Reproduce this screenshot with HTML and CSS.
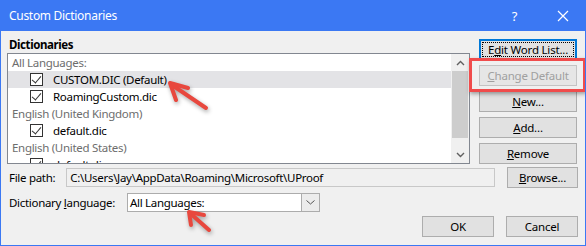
FILE: index.html
```html
<!DOCTYPE html>
<html lang="en">
<head>
  <meta charset="UTF-8" />
  <title>Custom Dictionaries</title>
  <link rel="stylesheet" href="styles.css">
</head>
<body>
  <div class="window">
    <div class="titlebar">
      <span class="title">Custom Dictionaries</span>
      <span class="help">?</span>
      <svg class="close" width="12" height="12" viewBox="0 0 12 12">
        <path d="M1 1 L11 11 M11 1 L1 11" stroke="#fff" stroke-width="1.2" fill="none"/>
      </svg>
    </div>

    <div class="content">
      <div class="top">
        <div class="dictpane">
          <div class="heading">Dictionaries</div>
          <div class="listbox">
            <div class="items">
              <div class="group">All Languages:</div>
              <div class="item selected"><span class="check"></span>CUSTOM.DIC (Default)</div>
              <div class="item"><span class="check"></span>RoamingCustom.dic</div>
              <div class="group">English (United Kingdom)</div>
              <div class="item"><span class="check"></span>default.dic</div>
              <div class="group">English (United States)</div>
              <div class="item last"><span class="check"></span>default.dic</div>
            </div>
            <div class="scrollbar">
              <div class="arrow up">
                <svg width="9" height="6" viewBox="0 0 9 6"><path d="M1 5 L4.5 1.5 L8 5" stroke="#606060" stroke-width="1.4" fill="none"/></svg>
              </div>
              <div class="thumb"></div>
              <div class="track"></div>
              <div class="arrow down">
                <svg width="9" height="6" viewBox="0 0 9 6"><path d="M1 1 L4.5 4.5 L8 1" stroke="#606060" stroke-width="1.4" fill="none"/></svg>
              </div>
            </div>
          </div>
        </div>

        <div class="sidebtns">
          <button class="btn focused"><span class="focusring">E<u>d</u>it Word List...</span></button>
          <button class="btn disabled"><u>C</u>hange Default</button>
          <button class="btn"><u>N</u>ew...</button>
          <button class="btn"><u>A</u>dd...</button>
          <button class="btn"><u>R</u>emove</button>
        </div>
      </div>

      <div class="pathrow">
        <span class="label">File path:</span>
        <div class="pathfield">C:\Users\Jay\AppData\Roaming\Microsoft\UProof</div>
        <button class="btn browse"><u>B</u>rowse...</button>
      </div>

      <div class="langrow">
        <span class="label">Dictionary <u>l</u>anguage:</span>
        <div class="combo">
          <span class="combo-value">All Languages:</span>
          <span class="combo-btn">
            <svg width="9" height="5" viewBox="0 0 9 5"><path d="M0.5 0.5 L4.5 4 L8.5 0.5" stroke="#555" stroke-width="1" fill="none"/></svg>
          </span>
        </div>
      </div>

      <div class="actions">
        <button class="btn action">OK</button>
        <button class="btn action">Cancel</button>
      </div>
    </div>

    <!-- annotations drawn over the screenshot -->
    <div class="highlight-box"></div>
    <svg class="annot" width="586" height="246" viewBox="0 0 586 246">
      <g stroke="#e8483e" stroke-width="4" stroke-linecap="round" stroke-linejoin="round" fill="none">
        <path d="M205 108 L171 85"/>
        <path d="M187 88 L169 83 L175 100"/>
        <path d="M208 230 L190 214"/>
        <path d="M203 215 L188 212 L190 225"/>
      </g>
    </svg>
  </div>
</body>
</html>
```

FILE: styles.css
```css
* {
  box-sizing: border-box;
}
body {
  margin: 0;
  font-family: 'Noto Sans', 'Open Sans', sans-serif;
  font-size: 11.5px;
  letter-spacing: -0.3px;
  color: #000;
  background: #fff;
}
.window {
  width: 586px;
  height: 246px;
  position: relative;
  background-color: #f0f0f0;
  border: 1px solid #3b78f3;
  border-top: none;
  overflow: hidden;
}
.titlebar {
  height: 31px;
  margin: 0 -1px;
  background-color: #3b78f3;
  color: #fff;
  display: flex;
  align-items: center;
  padding: 0 0 0 9px;
}
.title {
  flex: 1;
  font-size: 12px;
}
.help {
  font-size: 13px;
  margin-right: 40px;
}
.close {
  margin-right: 17px;
}

.content {
  padding: 6px 7px 0 6px;
}
.top {
  display: flex;
  gap: 9px;
}
.dictpane {
  width: 463px;
}
.heading {
  font-weight: 700;
  height: 16px;
  line-height: 16px;
  padding-left: 2px;
  letter-spacing: -0.4px;
}
.listbox {
  height: 111px;
  border: 1px solid #828790;
  background: #fff;
  display: flex;
  overflow: hidden;
}
.items {
  flex: 1;
  overflow: hidden;
}
.group, .item {
  height: 17px;
  line-height: 17px;
  white-space: nowrap;
}
.group {
  color: #6d6d6d;
  padding-left: 4px;
}
.item {
  display: flex;
  align-items: center;
  padding-left: 22px;
}
.item.last {
  height: 8px;
  align-items: flex-start;
  overflow: hidden;
}
.item.last .check {
  margin-top: 2px;
}
.item.selected {
  background-color: #e3e3e6;
}
.check {
  flex: none;
  width: 13px;
  height: 13px;
  border: 1px solid #333;
  background: #fff;
  margin-right: 10px;
  position: relative;
}
.check::after {
  content: "";
  position: absolute;
  left: 3px;
  top: 0px;
  width: 4px;
  height: 8px;
  border: solid #333;
  border-width: 0 1px 1px 0;
  transform: rotate(40deg);
}
.scrollbar {
  width: 18px;
  background: #f0f0f0;
  display: flex;
  flex-direction: column;
}
.arrow {
  height: 17px;
  display: flex;
  align-items: center;
  justify-content: center;
}
.thumb {
  height: 67px;
  margin: 0 1px;
  background: #cdcdcd;
}
.track {
  flex: 1;
}

.sidebtns {
  width: 98px;
  padding-top: 2px;
  display: flex;
  flex-direction: column;
  gap: 5px;
}
.btn {
  height: 21px;
  padding: 0;
  font-family: inherit;
  font-size: 11.5px;
  letter-spacing: -0.2px;
  color: #000;
  background-color: #e1e1e1;
  border: 1px solid #adadad;
}
.btn.focused {
  border: 2px solid #0078d7;
  padding: 1px;
}
.focusring {
  display: block;
  height: 100%;
  line-height: 13px;
  border: 1px dotted #000;
}
.btn.disabled {
  color: #a0a0a0;
  background-color: #e6e6e6;
  border-color: #c4c4c4;
}

.pathrow, .langrow {
  display: flex;
  align-items: center;
}
.pathrow {
  margin-top: 3px;
  height: 21px;
}
.label {
  padding-left: 2px;
}
.pathfield {
  flex: 1;
  height: 19px;
  margin-left: 11px;
  line-height: 17px;
  padding-left: 3px;
  border: 1px solid #c8c8c8;
  background: #f0f0f0;
  white-space: nowrap;
  overflow: hidden;
}
.browse {
  width: 71px;
  margin-left: 12px;
}
.langrow {
  margin-top: 4px;
  height: 20px;
}
.combo {
  width: 193px;
  height: 19px;
  margin-left: 12px;
  display: flex;
  border: 1px solid #acacac;
  background: #fff;
}
.combo-value {
  flex: 1;
  line-height: 17px;
  padding-left: 2px;
}
.combo-btn {
  width: 18px;
  border-left: 1px solid #acacac;
  background: #ececec;
  display: flex;
  align-items: center;
  justify-content: center;
}
.actions {
  display: flex;
  justify-content: flex-end;
  gap: 12px;
  margin-top: 4px;
}
.action {
  width: 72px;
}

.highlight-box {
  position: absolute;
  left: 468px;
  top: 58px;
  width: 117px;
  height: 34px;
  border: 3px solid #f04c4c;
  box-shadow: 1px 2px 4px rgba(0, 0, 0, 0.35);
}
.annot {
  position: absolute;
  left: 0;
  top: 0;
  filter: drop-shadow(1px 2px 2px rgba(0, 0, 0, 0.35));
}
```
